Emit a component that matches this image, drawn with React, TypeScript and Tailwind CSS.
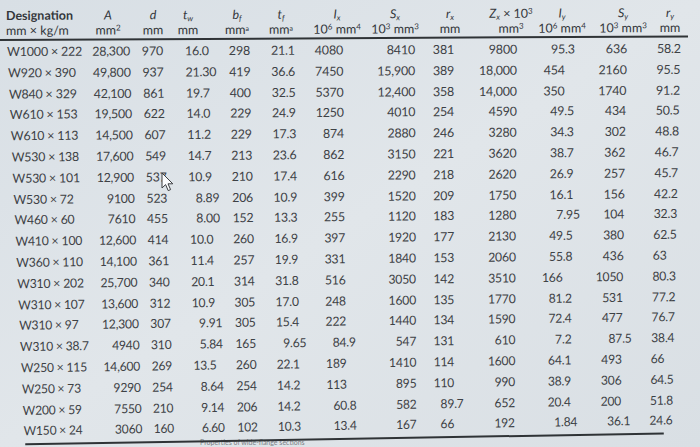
import React from "react";

type Row = string[];

const rows: Row[] = [
  ["W1000 × 222", "28,300", "970", "16.0", "298", "21.1", "4080", "8410", "381", "9800", "95.3", "636", "58.2"],
  ["W920 × 390", "49,800", "937", "21.30", "419", "36.6", "7450", "15,900", "389", "18,000", "454", "2160", "95.5"],
  ["W840 × 329", "42,100", "861", "19.7", "400", "32.5", "5370", "12,400", "358", "14,000", "350", "1740", "91.2"],
  ["W610 × 153", "19,500", "622", "14.0", "229", "24.9", "1250", "4010", "254", "4590", "49.5", "434", "50.5"],
  ["W610 × 113", "14,500", "607", "11.2", "229", "17.3", "874", "2880", "246", "3280", "34.3", "302", "48.8"],
  ["W530 × 138", "17,600", "549", "14.7", "213", "23.6", "862", "3150", "221", "3620", "38.7", "362", "46.7"],
  ["W530 × 101", "12,900", "537", "10.9", "210", "17.4", "616", "2290", "218", "2620", "26.9", "257", "45.7"],
  ["W530 × 72", "9100", "523", "8.89", "206", "10.9", "399", "1520", "209", "1750", "16.1", "156", "42.2"],
  ["W460 × 60", "7610", "455", "8.00", "152", "13.3", "255", "1120", "183", "1280", "7.95", "104", "32.3"],
  ["W410 × 100", "12,600", "414", "10.0", "260", "16.9", "397", "1920", "177", "2130", "49.5", "380", "62.5"],
  ["W360 × 110", "14,100", "361", "11.4", "257", "19.9", "331", "1840", "153", "2060", "55.8", "436", "63"],
  ["W310 × 202", "25,700", "340", "20.1", "314", "31.8", "516", "3050", "142", "3510", "166", "1050", "80.3"],
  ["W310 × 107", "13,600", "312", "10.9", "305", "17.0", "248", "1600", "135", "1770", "81.2", "531", "77.2"],
  ["W310 × 97", "12,300", "307", "9.91", "305", "15.4", "222", "1440", "134", "1590", "72.4", "477", "76.7"],
  ["W310 × 38.7", "4940", "310", "5.84", "165", "9.65", "84.9", "547", "131", "610", "7.2", "87.5", "38.4"],
  ["W250 × 115", "14,600", "269", "13.5", "260", "22.1", "189", "1410", "114", "1600", "64.1", "493", "66"],
  ["W250 × 73", "9290", "254", "8.64", "254", "14.2", "113", "895", "110", "990", "38.9", "306", "64.5"],
  ["W200 × 59", "7550", "210", "9.14", "206", "14.2", "60.8", "582", "89.7", "652", "20.4", "200", "51.8"],
  ["W150 × 24", "3060", "160", "6.60", "102", "10.3", "13.4", "167", "66", "192", "1.84", "36.1", "24.6"],
];

// body column widths, and width kept for the fraction so decimals line up
const colW = ["w-[45px]", "w-[33px]", "w-[52px]", "w-[35px]", "w-[51px]", "w-[52px]", "w-[62px]", "w-[49px]", "w-[53px]", "w-[64px]", "w-[56px]", "w-[44px]"];
const fracW = ["w-0", "w-0", "w-[16px]", "w-0", "w-[16px]", "w-[10px]", "w-0", "w-[10px]", "w-0", "w-[16px]", "w-[10px]", "w-[10px]"];

// header cells sized so each label sits centred over its column
const headW = ["w-[46px]", "w-[44px]", "w-[26px]", "w-[72px]", "w-[16px]", "w-[96px]", "w-[20px]", "w-[90px]", "w-[32px]", "w-[70px]", "w-[52px]", "w-[42px]"];

const headers: { sym: React.ReactNode; unit: React.ReactNode }[] = [
  { sym: <i>A</i>, unit: <>mm<sup className="text-[8px]">2</sup></> },
  { sym: <i>d</i>, unit: "mm" },
  { sym: <i>t<sub className="text-[8px]">w</sub></i>, unit: "mm" },
  { sym: <i>b<sub className="text-[8px]">f</sub></i>, unit: <>mm<sup className="text-[7px]">a</sup></> },
  { sym: <i>t<sub className="text-[8px]">f</sub></i>, unit: <>mm<sup className="text-[7px]">a</sup></> },
  { sym: <i>I<sub className="text-[8px]">x</sub></i>, unit: <>10<sup className="text-[8px]">6</sup> mm<sup className="text-[8px]">4</sup></> },
  { sym: <i>S<sub className="text-[8px]">x</sub></i>, unit: <>10<sup className="text-[8px]">3</sup> mm<sup className="text-[8px]">3</sup></> },
  { sym: <i>r<sub className="text-[8px]">x</sub></i>, unit: "mm" },
  { sym: <><i>Z<sub className="text-[8px]">x</sub></i> × 10<sup className="text-[8px]">3</sup></>, unit: <>mm<sup className="text-[8px]">3</sup></> },
  { sym: <i>I<sub className="text-[8px]">y</sub></i>, unit: <>10<sup className="text-[8px]">6</sup> mm<sup className="text-[8px]">4</sup></> },
  { sym: <i>S<sub className="text-[8px]">y</sub></i>, unit: <>10<sup className="text-[8px]">3</sup> mm<sup className="text-[8px]">3</sup></> },
  { sym: <i>r<sub className="text-[8px]">y</sub></i>, unit: "mm" },
];

// the photo was taken at a slight angle: lower rows tilt and narrow a little
const tilt = (i: number) => {
  const t = i / 18;
  const deg = -(0.26 + 0.038 * i);
  const sx = 1 - 0.037 * t;
  return { transform: `translateY(-1px) rotate(${deg}deg) scaleX(${sx})`, transformOrigin: "458px 50%" };
};

const Num = ({ v, w, f }: { v: string; w: string; f: string }) => {
  const dot = v.indexOf(".");
  const int = dot < 0 ? v : v.slice(0, dot);
  const frac = dot < 0 ? "" : v.slice(dot);
  return (
    <div className={`flex shrink-0 ${w}`}>
      <span className="flex-1 text-right">{int}</span>
      <span className={`shrink-0 text-left whitespace-nowrap ${f}`}>{frac}</span>
    </div>
  );
};

const Cursor = () => (
  <svg width="13" height="20" viewBox="0 0 13 20" className="absolute left-[161px] top-[172px]">
    <path d="M1 1 L1 16 L4.6 12.6 L7.2 18.6 L9.6 17.6 L7 11.8 L11.8 11.8 Z" fill="#fbfcfd" stroke="#3a3d40" strokeWidth="1" strokeLinejoin="round" />
  </svg>
);

export default function App() {
  return (
    <div className="relative h-[447px] w-[700px] overflow-hidden bg-linear-to-br from-[#d8dfe5] via-[#e1e6ea] to-[#d9dfe4] font-['Lato','Open_Sans',sans-serif] text-[#3d4145]">
      {/* header */}
      <div className="origin-[458px_50%] -rotate-[0.25deg] pt-[6px] text-[12.5px] leading-[15px] text-[#33373b]">
        <div className="flex">
          <div className="w-[85px] shrink-0 pl-[6px] font-bold">Designation</div>
          {headers.map((h, i) => (
            <div key={i} className={`flex shrink-0 justify-center whitespace-nowrap ${headW[i]}`}>
              <span>{h.sym}</span>
            </div>
          ))}
        </div>
        <div className="flex">
          <div className="w-[85px] shrink-0 pl-[6px]">mm × kg/m</div>
          {headers.map((h, i) => (
            <div key={i} className={`flex shrink-0 justify-center whitespace-nowrap ${headW[i]}`}>
              <span>{h.unit}</span>
            </div>
          ))}
        </div>
      </div>
      <div className="mt-[3px] h-[2px] w-[688px] origin-left -rotate-[0.3deg] bg-[#2f3336]" />

      {/* body */}
      <div className="text-[12.5px] tracking-[-0.2px]">
        {rows.map((r, i) => (
          <div key={r[0]} className="flex h-[20.8px] items-center" style={tilt(i)}>
            <div className="w-[85px] shrink-0 whitespace-nowrap pl-[7px]">{r[0]}</div>
            {r.slice(1).map((v, j) => (
              <Num key={j} v={v} w={colW[j]} f={fracW[j]} />
            ))}
          </div>
        ))}
      </div>
      <div className="mt-[1px] w-[681px]" style={tilt(18.6)}>
        <div className="ml-[8px] h-[2px] w-[664px] bg-[#2f3336]" />
      </div>
      <div className="ml-[200px] mt-[-1px] text-[7px] leading-[8px] text-[#7a7f84]">Properties of wide-flange sections</div>

      <Cursor />
    </div>
  );
}
